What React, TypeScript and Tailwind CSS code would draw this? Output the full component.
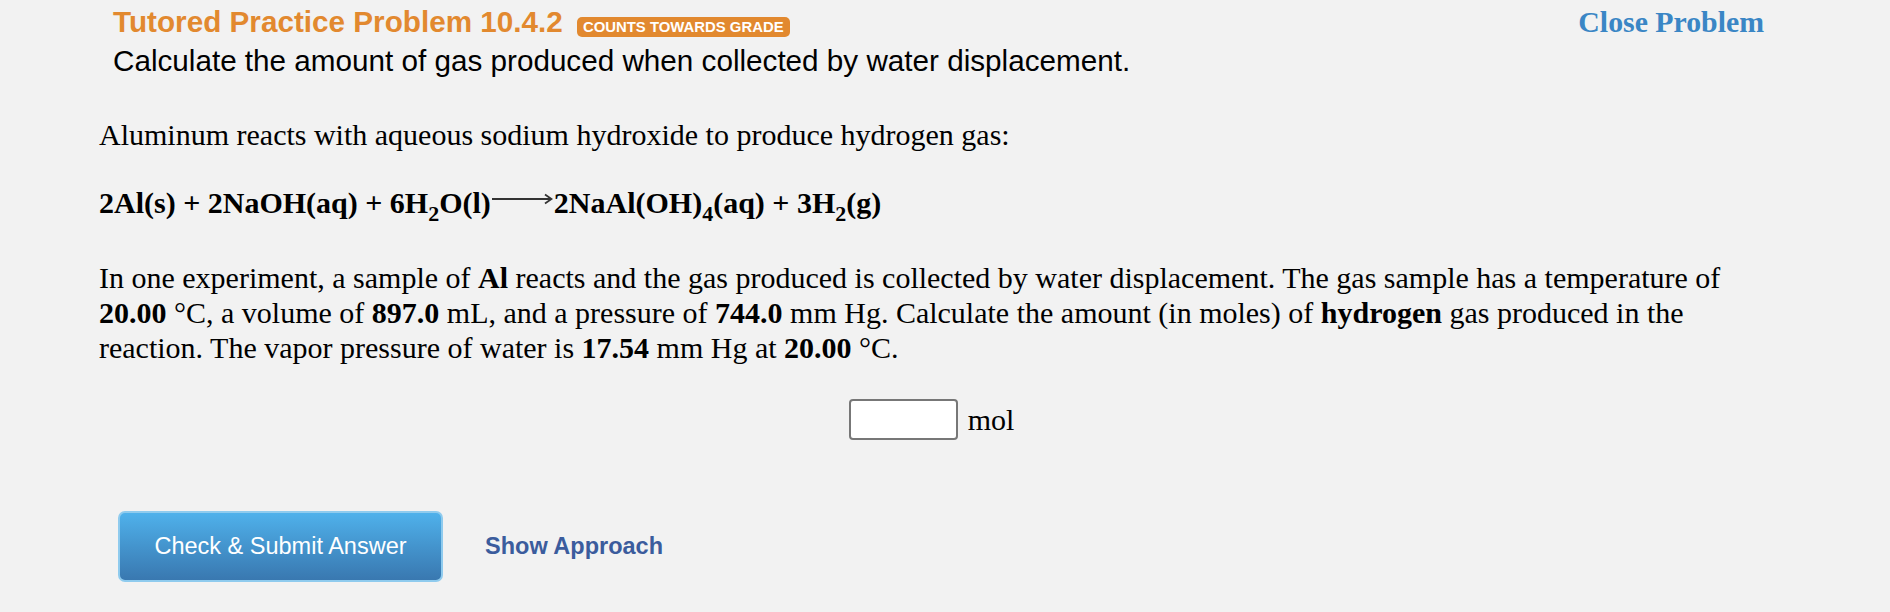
import React from "react";

const serif = { fontFamily: '"Liberation Serif", "Times New Roman", serif' };

function Sub({ children }: { children: React.ReactNode }) {
  return (
    <span className="relative top-[8px] text-[22px] leading-none">
      {children}
    </span>
  );
}

function Arrow() {
  return (
    <svg
      width="61"
      height="14"
      viewBox="0 0 61 14"
      className="mx-[1px] inline-block align-[7px]"
    >
      <line x1="0" y1="7" x2="59" y2="7" stroke="#333" strokeWidth="2" />
      <path d="M53 2.5 L59.5 7 L53 11.5" fill="none" stroke="#333" strokeWidth="1.8" />
    </svg>
  );
}

export default function App() {
  return (
    <div
      className="min-h-[612px] w-full bg-[#f2f2f2] pl-[99px] pr-[126px] text-black"
      style={{ fontFamily: '"Liberation Sans", Arial, sans-serif' }}
    >
      {/* HEADER */}
      <div className="flex items-start justify-between pt-[5px] pl-[14px]">
        <div className="flex items-baseline">
          <h1 className="text-[29.7px] font-bold leading-[34px] text-[#e2892f]">
            Tutored Practice Problem 10.4.2
          </h1>
          <span className="ml-[14px] rounded-[5px] bg-[#e2892f] px-[6px] text-[14.9px] font-bold leading-[20px] text-white">
            COUNTS TOWARDS GRADE
          </span>
        </div>

        <a
          href="#"
          className="text-[29.8px] font-bold leading-[34px] text-[#3a86c5]"
          style={serif}
        >
          Close Problem
        </a>
      </div>

      <p className="mt-[5px] pl-[14px] text-[29.66px] leading-[34px]">
        Calculate the amount of gas produced when collected by water displacement.
      </p>

      {/* QUESTION */}
      <div style={serif} className="text-[30px] leading-[35px]">
        <p className="mt-[39px]">
          Aluminum reacts with aqueous sodium hydroxide to produce hydrogen gas:
        </p>

        <p className="mt-[33px] font-bold whitespace-nowrap">
          2Al(s) + 2NaOH(aq) + 6H<Sub>2</Sub>O(l)
          <Arrow />
          2NaAl(OH)<Sub>4</Sub>(aq) + 3H<Sub>2</Sub>(g)
        </p>

        <p className="mt-[40px]">
          In one experiment, a sample of <b>Al</b> reacts and the gas produced is
          collected by water displacement. The gas sample has a temperature of{" "}
          <b>20.00</b> °C, a volume of <b>897.0</b> mL, and a pressure of{" "}
          <b>744.0</b> mm Hg. Calculate the amount (in moles) of <b>hydrogen</b>{" "}
          gas produced in the reaction. The vapor pressure of water is{" "}
          <b>17.54</b> mm Hg at <b>20.00</b> °C.
        </p>

        {/* ANSWER */}
        <div className="mt-[34px] flex items-center justify-center gap-[10px]">
          <input
            type="text"
            className="h-[41px] w-[109px] rounded-[4px] border-2 border-[#777] bg-white px-2 outline-none"
          />
          <span>mol</span>
        </div>
      </div>

      {/* ACTIONS */}
      <div className="mt-[71px] flex items-center pl-[19px]">
        <button className="h-[71px] w-[325px] rounded-[7px] border-2 border-[#8fcbee] bg-gradient-to-b from-[#4fb1eb] to-[#3978b0] text-[23.5px] text-white">
          Check &amp; Submit Answer
        </button>
        <a
          href="#"
          className="ml-[42px] text-[23.5px] font-bold text-[#3b5c9d]"
        >
          Show Approach
        </a>
      </div>
    </div>
  );
}
